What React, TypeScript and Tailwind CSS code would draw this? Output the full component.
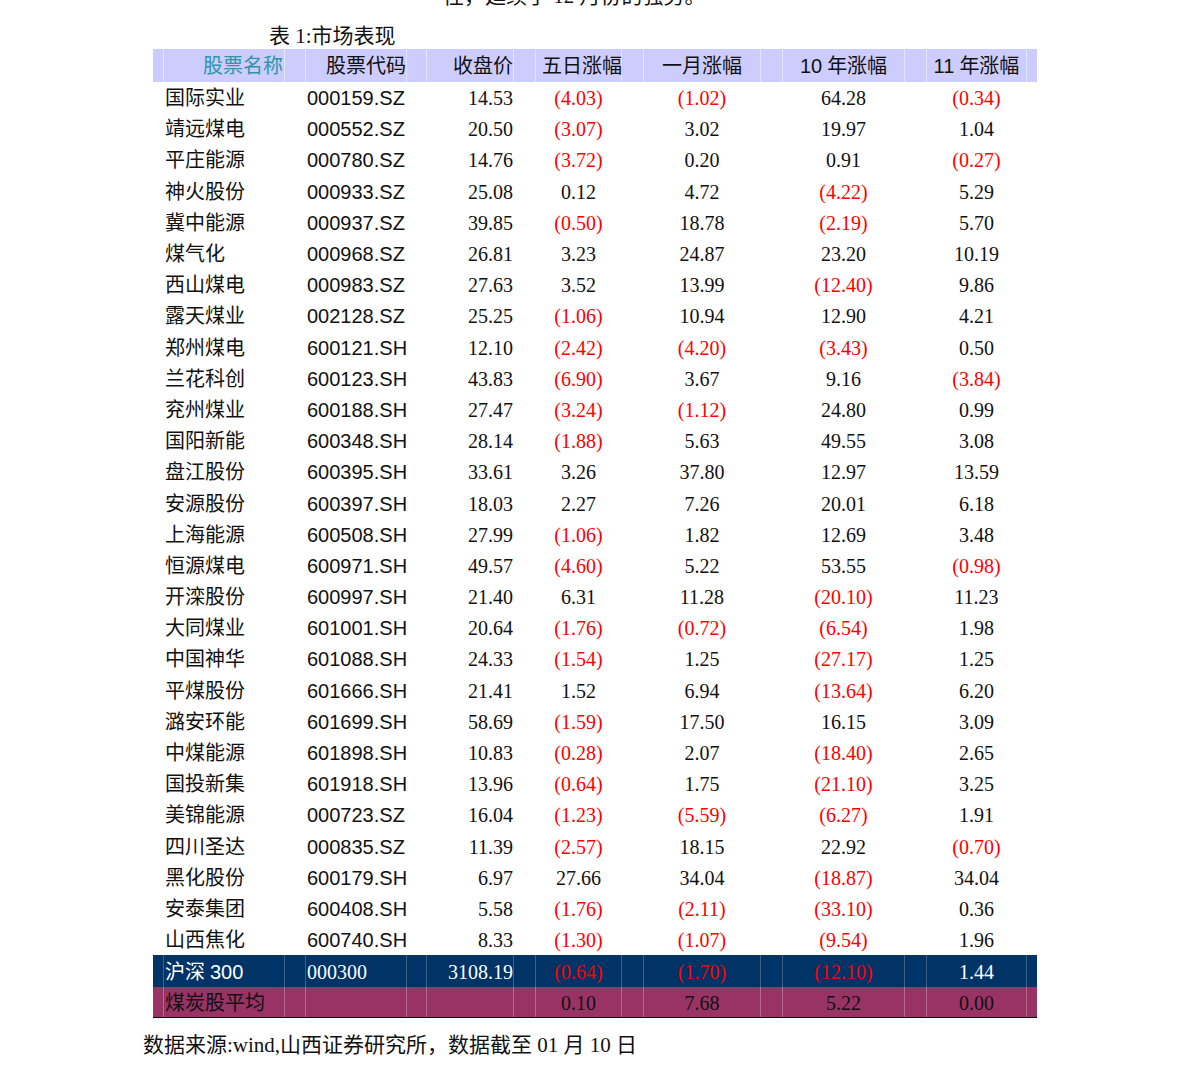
import clsx from 'clsx';
import type { ReactNode } from 'react';

const cn = clsx;

type Variant = 'head' | 'body' | 'index' | 'avg';

const serif = "font-['Liberation_Serif','Noto_Sans_CJK_SC',serif]";
const sans = "font-['Liberation_Sans','Noto_Sans_CJK_SC',sans-serif]";

const rows: string[][] = [
  ['国际实业', '000159.SZ', '14.53', '(4.03)', '(1.02)', '64.28', '(0.34)'],
  ['靖远煤电', '000552.SZ', '20.50', '(3.07)', '3.02', '19.97', '1.04'],
  ['平庄能源', '000780.SZ', '14.76', '(3.72)', '0.20', '0.91', '(0.27)'],
  ['神火股份', '000933.SZ', '25.08', '0.12', '4.72', '(4.22)', '5.29'],
  ['冀中能源', '000937.SZ', '39.85', '(0.50)', '18.78', '(2.19)', '5.70'],
  ['煤气化', '000968.SZ', '26.81', '3.23', '24.87', '23.20', '10.19'],
  ['西山煤电', '000983.SZ', '27.63', '3.52', '13.99', '(12.40)', '9.86'],
  ['露天煤业', '002128.SZ', '25.25', '(1.06)', '10.94', '12.90', '4.21'],
  ['郑州煤电', '600121.SH', '12.10', '(2.42)', '(4.20)', '(3.43)', '0.50'],
  ['兰花科创', '600123.SH', '43.83', '(6.90)', '3.67', '9.16', '(3.84)'],
  ['兖州煤业', '600188.SH', '27.47', '(3.24)', '(1.12)', '24.80', '0.99'],
  ['国阳新能', '600348.SH', '28.14', '(1.88)', '5.63', '49.55', '3.08'],
  ['盘江股份', '600395.SH', '33.61', '3.26', '37.80', '12.97', '13.59'],
  ['安源股份', '600397.SH', '18.03', '2.27', '7.26', '20.01', '6.18'],
  ['上海能源', '600508.SH', '27.99', '(1.06)', '1.82', '12.69', '3.48'],
  ['恒源煤电', '600971.SH', '49.57', '(4.60)', '5.22', '53.55', '(0.98)'],
  ['开滦股份', '600997.SH', '21.40', '6.31', '11.28', '(20.10)', '11.23'],
  ['大同煤业', '601001.SH', '20.64', '(1.76)', '(0.72)', '(6.54)', '1.98'],
  ['中国神华', '601088.SH', '24.33', '(1.54)', '1.25', '(27.17)', '1.25'],
  ['平煤股份', '601666.SH', '21.41', '1.52', '6.94', '(13.64)', '6.20'],
  ['潞安环能', '601699.SH', '58.69', '(1.59)', '17.50', '16.15', '3.09'],
  ['中煤能源', '601898.SH', '10.83', '(0.28)', '2.07', '(18.40)', '2.65'],
  ['国投新集', '601918.SH', '13.96', '(0.64)', '1.75', '(21.10)', '3.25'],
  ['美锦能源', '000723.SZ', '16.04', '(1.23)', '(5.59)', '(6.27)', '1.91'],
  ['四川圣达', '000835.SZ', '11.39', '(2.57)', '18.15', '22.92', '(0.70)'],
  ['黑化股份', '600179.SH', '6.97', '27.66', '34.04', '(18.87)', '34.04'],
  ['安泰集团', '600408.SH', '5.58', '(1.76)', '(2.11)', '(33.10)', '0.36'],
  ['山西焦化', '600740.SH', '8.33', '(1.30)', '(1.07)', '(9.54)', '1.96'],
];

const lineColor: Record<Variant, string> = {
  head: 'border-[#e4e4ff]',
  body: 'border-transparent',
  index: 'border-[#3b5f86]',
  avg: 'border-[#b4698f]',
};

const rowStyle: Record<Variant, string> = {
  head: 'h-[33px] bg-[#ccccff]',
  body: 'h-[31.2px]',
  index: 'h-[32px] bg-[#003366] text-white',
  avg: 'h-[31px] bg-[#993366] border-b border-black',
};

// each data column sits between a pair of thin grid lines
function Row({ cells, variant }: { cells: ReactNode[]; variant: Variant }) {
  const [name, code, price, d5, m1, y10, y11] = cells;
  const b = cn('border-r h-full', lineColor[variant]);
  const cell = 'h-full flex items-center whitespace-nowrap pt-[1px]';
  return (
    <div
      className={cn(
        'grid grid-cols-[11px_121px_21px_101px_20px_87px_22px_86px_22px_117px_22px_122px_22px_100px_10px] items-stretch text-[20px] leading-none',
        rowStyle[variant]
      )}
    >
      <div className={b} />
      <div className={cn(cell, b, variant === 'head' ? 'justify-end pr-[1px]' : 'pl-[1px]')}>{name}</div>
      <div className={b} />
      <div className={cn(cell, b, variant === 'head' ? 'justify-end' : 'pl-[1px]')}>{code}</div>
      <div className={b} />
      <div className={cn(cell, b, 'justify-end')}>{price}</div>
      <div className={b} />
      <div className={cn(cell, b, 'justify-center', variant === 'head' && 'pl-[7px]')}>{d5}</div>
      <div className={b} />
      <div className={cn(cell, b, 'justify-center')}>{m1}</div>
      <div className={b} />
      <div className={cn(cell, b, 'justify-center')}>{y10}</div>
      <div className={b} />
      <div className={cn(cell, b, 'justify-center')}>{y11}</div>
      <div />
    </div>
  );
}

function Num({ v, neg = 'text-[#ff0000]' }: { v: string; neg?: string }) {
  return <span className={cn(serif, v.startsWith('(') && neg)}>{v}</span>;
}

export default function App() {
  return (
    <div className="w-[1191px] h-[1077px] bg-white overflow-hidden text-[#111]">
      <div className={cn(serif, 'mt-[-16px] pl-[443px] text-[21px] leading-[24px] whitespace-nowrap')}>
        性，延续了 12 月份的强势。
      </div>

      <div className={cn(serif, 'mt-[16px] pl-[269px] text-[21px] leading-[24px]')}>表 1:市场表现</div>

      <div className="mt-[1px] ml-[153px] w-[884px]">
        <Row
          variant="head"
          cells={[
            <span className={cn(serif, 'text-[#2f96a6]')}>股票名称</span>,
            <span className={serif}>股票代码</span>,
            <span className={serif}>收盘价</span>,
            <span className={serif}>五日涨幅</span>,
            <span className={serif}>一月涨幅</span>,
            <span className={serif}>
              <span className={sans}>10</span> 年涨幅
            </span>,
            <span className={serif}>
              <span className={sans}>11</span> 年涨幅
            </span>,
          ]}
        />

        {rows.map((r) => (
          <Row
            key={r[1]}
            variant="body"
            cells={[
              <span className={serif}>{r[0]}</span>,
              <span className={sans}>{r[1]}</span>,
              <Num v={r[2]} />,
              <Num v={r[3]} />,
              <Num v={r[4]} />,
              <Num v={r[5]} />,
              <Num v={r[6]} />,
            ]}
          />
        ))}

        <Row
          variant="index"
          cells={[
            <span className={serif}>
              沪深 <span className={sans}>300</span>
            </span>,
            <span className={serif}>000300</span>,
            <Num v="3108.19" />,
            <Num v="(0.64)" />,
            <Num v="(1.70)" />,
            <Num v="(12.10)" />,
            <Num v="1.44" />,
          ]}
        />
        <Row
          variant="avg"
          cells={[
            <span className={cn(serif, 'text-[#111]')}>煤炭股平均</span>,
            null,
            null,
            <Num v="0.10" />,
            <Num v="7.68" />,
            <Num v="5.22" />,
            <Num v="0.00" />,
          ]}
        />
      </div>

      <div className={cn(serif, 'mt-[15px] pl-[143px] text-[21px] leading-[24px] whitespace-nowrap')}>
        数据来源:wind,山西证券研究所，数据截至 01 月 10 日
      </div>
    </div>
  );
}
